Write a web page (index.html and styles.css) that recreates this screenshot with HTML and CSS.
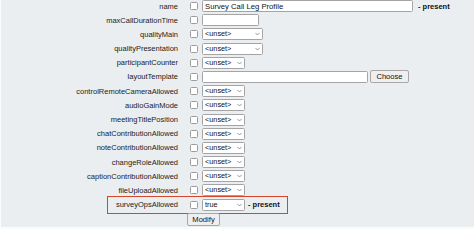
FILE: index.html
```html
<!DOCTYPE html>
<html lang="en">
<head>
    <meta charset="UTF-8">
    <title>Call Leg Profile</title>
    <link rel="stylesheet" href="styles.css">
</head>
<body>
    <div class="page">
        <div class="form">
            <div class="row">
                <label class="key">name</label>
                <input type="checkbox" class="chk">
                <input type="text" class="txt name-field" value="Survey Call Leg Profile">
                <span class="present">- present</span>
            </div>
            <div class="row">
                <label class="key">maxCallDurationTime</label>
                <input type="checkbox" class="chk">
                <input type="text" class="txt short">
            </div>
            <div class="row">
                <label class="key">qualityMain</label>
                <input type="checkbox" class="chk">
                <span class="sel wide"><select><option>&lt;unset&gt;</option></select><svg class="chev" viewBox="0 0 6 4"><path d="M0.5 0.7 L3 3.2 L5.5 0.7"/></svg></span>
            </div>
            <div class="row">
                <label class="key">qualityPresentation</label>
                <input type="checkbox" class="chk">
                <span class="sel wide"><select><option>&lt;unset&gt;</option></select><svg class="chev" viewBox="0 0 6 4"><path d="M0.5 0.7 L3 3.2 L5.5 0.7"/></svg></span>
            </div>
            <div class="row">
                <label class="key">participantCounter</label>
                <input type="checkbox" class="chk">
                <span class="sel"><select><option>&lt;unset&gt;</option></select><svg class="chev" viewBox="0 0 6 4"><path d="M0.5 0.7 L3 3.2 L5.5 0.7"/></svg></span>
            </div>
            <div class="row">
                <label class="key">layoutTemplate</label>
                <input type="checkbox" class="chk">
                <input type="text" class="txt template">
                <button class="btn choose">Choose</button>
            </div>
            <div class="row">
                <label class="key">controlRemoteCameraAllowed</label>
                <input type="checkbox" class="chk">
                <span class="sel"><select><option>&lt;unset&gt;</option></select><svg class="chev" viewBox="0 0 6 4"><path d="M0.5 0.7 L3 3.2 L5.5 0.7"/></svg></span>
            </div>
            <div class="row">
                <label class="key">audioGainMode</label>
                <input type="checkbox" class="chk">
                <span class="sel"><select><option>&lt;unset&gt;</option></select><svg class="chev" viewBox="0 0 6 4"><path d="M0.5 0.7 L3 3.2 L5.5 0.7"/></svg></span>
            </div>
            <div class="row">
                <label class="key">meetingTitlePosition</label>
                <input type="checkbox" class="chk">
                <span class="sel"><select><option>&lt;unset&gt;</option></select><svg class="chev" viewBox="0 0 6 4"><path d="M0.5 0.7 L3 3.2 L5.5 0.7"/></svg></span>
            </div>
            <div class="row">
                <label class="key">chatContributionAllowed</label>
                <input type="checkbox" class="chk">
                <span class="sel"><select><option>&lt;unset&gt;</option></select><svg class="chev" viewBox="0 0 6 4"><path d="M0.5 0.7 L3 3.2 L5.5 0.7"/></svg></span>
            </div>
            <div class="row">
                <label class="key">noteContributionAllowed</label>
                <input type="checkbox" class="chk">
                <span class="sel"><select><option>&lt;unset&gt;</option></select><svg class="chev" viewBox="0 0 6 4"><path d="M0.5 0.7 L3 3.2 L5.5 0.7"/></svg></span>
            </div>
            <div class="row">
                <label class="key">changeRoleAllowed</label>
                <input type="checkbox" class="chk">
                <span class="sel"><select><option>&lt;unset&gt;</option></select><svg class="chev" viewBox="0 0 6 4"><path d="M0.5 0.7 L3 3.2 L5.5 0.7"/></svg></span>
            </div>
            <div class="row">
                <label class="key">captionContributionAllowed</label>
                <input type="checkbox" class="chk">
                <span class="sel"><select><option>&lt;unset&gt;</option></select><svg class="chev" viewBox="0 0 6 4"><path d="M0.5 0.7 L3 3.2 L5.5 0.7"/></svg></span>
            </div>
            <div class="row">
                <label class="key">fileUploadAllowed</label>
                <input type="checkbox" class="chk">
                <span class="sel"><select><option>&lt;unset&gt;</option></select><svg class="chev" viewBox="0 0 6 4"><path d="M0.5 0.7 L3 3.2 L5.5 0.7"/></svg></span>
            </div>
            <!-- highlighted row -->
            <div class="row">
                <div class="mark"></div>
                <label class="key">surveyOpsAllowed</label>
                <input type="checkbox" class="chk">
                <span class="sel"><select><option>true</option></select><svg class="chev" viewBox="0 0 6 4"><path d="M0.5 0.7 L3 3.2 L5.5 0.7"/></svg></span>
                <span class="present tight">- present</span>
            </div>
            <div class="row actions">
                <button class="btn">Modify</button>
            </div>
        </div>
    </div>
</body>
</html>
```

FILE: styles.css
```css
* { box-sizing: border-box; }
body {
    margin: 0;
    background: #fafbfb;
    font-family: "Liberation Sans", Arial, sans-serif;
}
.page {
    margin-left: 1px;
    height: 227px;
    background: #ebeef0;
    overflow: hidden;
}
.form { margin-top: -1.1px; }
.row {
    display: flex;
    align-items: center;
    height: 14.2px;
    position: relative;
}
.key {
    flex: none;
    width: 177px;
    text-align: right;
    font-size: 7.5px;
    color: #222;
}
.chk {
    appearance: none;
    -webkit-appearance: none;
    flex: none;
    width: 8px;
    height: 8px;
    margin: 0 4px 0 12px;
    border: 1px solid #9c9c9c;
    border-radius: 1.5px;
    background: #fff;
}
.txt {
    flex: none;
    height: 12px;
    padding: 0 2px;
    border: 1px solid #a4a4a4;
    border-radius: 1.5px;
    background: #fff;
    font-family: inherit;
    font-size: 7.7px;
    color: #111;
    outline: none;
}
.name-field { width: 211px; }
.short { width: 57px; }
.template { width: 166px; }
.present {
    margin-left: 5px;
    font-size: 7.5px;
    font-weight: bold;
    color: #111;
}
.present.tight { margin-left: 3px; }
.sel {
    flex: none;
    position: relative;
    display: block;
    width: 43px;
    height: 12px;
}
.sel.wide { width: 61px; }
.sel select {
    display: block;
    appearance: none;
    -webkit-appearance: none;
    width: 100%;
    height: 12px;
    margin: 0;
    padding: 0 0 0 2px;
    border: 1px solid #a4a4a4;
    border-radius: 1.5px;
    background: #fff;
    font-family: inherit;
    font-size: 7.3px;
    color: #111;
    line-height: 10px;
}
.chev {
    position: absolute;
    right: 3px;
    top: 4px;
    width: 5px;
    height: 4px;
    fill: none;
    stroke: #777;
    stroke-width: 0.9;
}
.btn {
    height: 13px;
    padding: 0 4px;
    border: 1px solid #a8a8a8;
    border-radius: 2px;
    background: #efefef;
    font-family: inherit;
    font-size: 7.6px;
    color: #111;
    line-height: 11px;
}
.choose { margin-left: 2px; width: 39px; }
.actions { padding-left: 186px; height: 15px; }
.actions .btn { width: 33px; }
.mark {
    position: absolute;
    left: 106px;
    top: -2px;
    width: 181px;
    height: 18px;
    border: 1.5px solid #d5462c;
    pointer-events: none;
}
```
